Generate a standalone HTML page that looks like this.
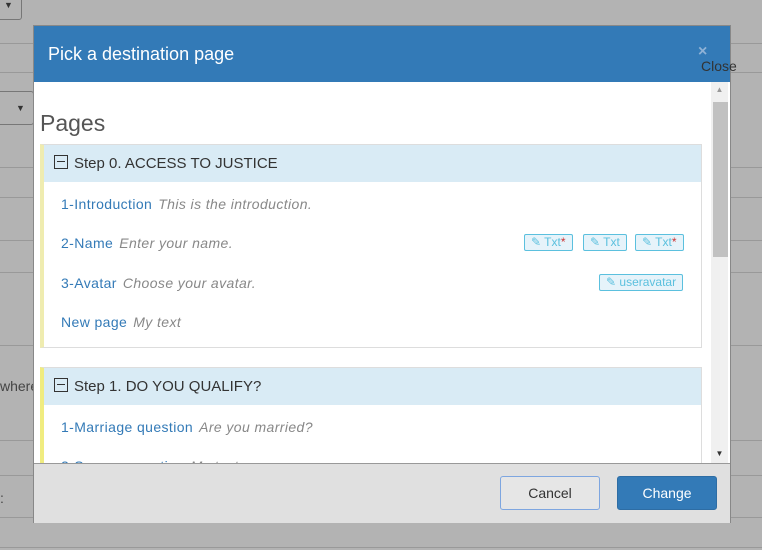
<!DOCTYPE html>
<html><head><style>
body{margin:0;width:762px;height:550px;background:#b3b3b3;position:relative;overflow:hidden;font-family:"Liberation Sans",sans-serif;}
.ln{position:absolute;left:0;width:762px;height:1px;background:#999;}
.dlg{position:absolute;left:33px;top:25px;width:696px;height:496px;background:#fff;border:1px solid #888;}
.hd{position:absolute;left:0;top:0;width:696px;height:56px;background:#337ab7;color:#fff;font-size:18px;line-height:56px;}
.hd span{position:absolute;left:14px;}
.x{position:absolute;left:664px;top:18px;font-size:16px;color:#8fb2d6;line-height:16px;font-weight:bold}
.close{position:absolute;left:667px;top:32px;font-size:14px;color:#333;line-height:16px}
.body{position:absolute;left:0;top:56px;width:696px;height:381px;overflow:hidden;}
.sb{position:absolute;left:677px;top:0;width:17px;height:381px;background:#f0f0f0}
.thumb{position:absolute;left:2px;top:20px;width:15px;height:155px;background:#c1c1c1}
h1{position:absolute;left:6px;top:28px;margin:0;font-weight:normal;font-size:23px;color:#555}
.panel{position:absolute;left:6px;width:657px;border:1px solid #ddd;border-left:4px solid #efecb0;}
.ph{height:37px;background:#d9ebf5;font-size:15px;color:#333;line-height:37px;padding-left:10px}
.ph i{display:inline-block;width:12px;height:12px;border:1px solid #333;vertical-align:-1px;margin-right:6px;position:relative}
.ph i:after{content:"";position:absolute;left:2px;right:2px;top:5px;height:1px;background:#333}
.row{position:absolute;left:17px;font-size:14px;color:#337ab7;letter-spacing:0.4px}
.row em{color:#888;margin-left:6px}
.tg{position:absolute;height:15px;border:1px solid #5bc0de;background:#e6f3fa;color:#5bc0de;font-size:12px;line-height:15px;padding:0 6px;border-radius:2px}
.tg b{color:#c33;font-weight:normal}
.ft{position:absolute;left:0;top:437px;width:696px;height:59px;background:#e0e0e0;border-top:1px solid #999}
.btn{position:absolute;top:12px;height:32px;font-size:14px;line-height:32px;text-align:center;border-radius:3px}
</style></head><body>
<div class="ln" style="top:43px"></div><div class="ln" style="top:72px"></div><div class="ln" style="top:167px"></div><div class="ln" style="top:197px"></div><div class="ln" style="top:240px"></div><div class="ln" style="top:272px"></div><div class="ln" style="top:345px"></div><div class="ln" style="top:440px"></div><div class="ln" style="top:475px"></div><div class="ln" style="top:517px"></div><div class="ln" style="top:547px"></div>
<div style="position:absolute;left:-5px;top:-5px;width:25px;height:23px;border:1px solid #777;border-radius:3px;background:#b3b3b3;font-size:9px;text-align:center;line-height:18px;color:#333">▼</div>
<div style="position:absolute;left:-5px;top:91px;width:37px;height:32px;border:1px solid #777;border-radius:3px;background:#b3b3b3;font-size:9px;line-height:32px;color:#333;text-indent:20px">▼</div>
<div style="position:absolute;left:0;top:378px;font-size:14px;color:#444">where</div>
<div style="position:absolute;left:0;top:490px;font-size:14px;color:#444">:</div>
<div class="dlg">
<div class="hd"><span>Pick a destination page</span><div class="x">×</div><div class="close">Close</div></div>
<div class="body">
<h1>Pages</h1>
<div class="panel" style="top:62px;height:202px">
<div class="ph"><i></i>Step 0. ACCESS TO JUSTICE</div>
<div class="row" style="top:51px">1-Introduction<em>This is the introduction.</em></div>
<div class="row" style="top:90px">2-Name<em>Enter your name.</em></div>
<div class="tg" style="left:480px;top:89px">✎ Txt<b>*</b></div>
<div class="tg" style="left:539px;top:89px">✎ Txt</div>
<div class="tg" style="left:591px;top:89px">✎ Txt<b>*</b></div>
<div class="row" style="top:130px">3-Avatar<em>Choose your avatar.</em></div>
<div class="tg" style="left:555px;top:129px">✎ useravatar</div>
<div class="row" style="top:169px">New page<em>My text</em></div>
</div>
<div class="panel" style="top:285px;height:120px;border-left-color:#f0ec80">
<div class="ph"><i></i>Step 1. DO YOU QUALIFY?</div>
<div class="row" style="top:51px">1-Marriage question<em>Are you married?</em></div>
<div class="row" style="top:90px">2-Spouse question<em>My text</em></div>
</div>
<div class="sb"><div style="font-size:8px;color:#999;text-align:center;line-height:16px">▲</div><div class="thumb"></div><div style="position:absolute;top:364px;width:17px;font-size:8px;color:#333;text-align:center;line-height:16px">▼</div></div>
</div>
<div class="ft">
<div class="btn" style="left:466px;width:98px;background:#e6e6e6;border:1px solid #7ea6e0;color:#333">Cancel</div>
<div class="btn" style="left:583px;width:98px;background:#337ab7;border:1px solid #2e6da4;color:#fff">Change</div>
</div>
</div>
</body></html>
